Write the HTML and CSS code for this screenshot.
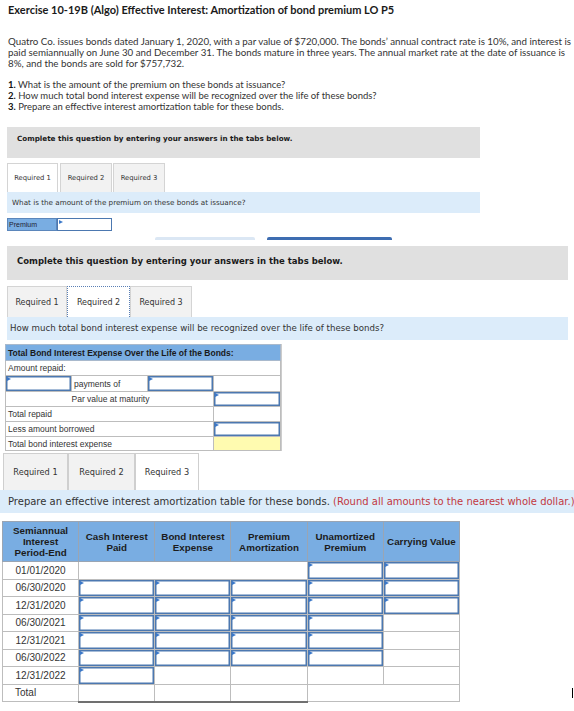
FILE: index.html
```html
<!DOCTYPE html>
<html>
<head>
<meta charset="utf-8">
<link rel="stylesheet" href="styles.css">
</head>
<body>
<div class="page">
  <h1 class="title">Exercise 10-19B (Algo) Effective Interest: Amortization of bond premium LO P5</h1>
  <p class="intro">Quatro Co. issues bonds dated January 1, 2020, with a par value of $720,000. The bonds’ annual contract rate is 10%, and interest is<br>paid semiannually on June 30 and December 31. The bonds mature in three years. The annual market rate at the date of issuance is<br>8%, and the bonds are sold for $757,732.</p>
  <ol class="reqs">
    <li><b>1.</b> What is the amount of the premium on these bonds at issuance?</li>
    <li><b>2.</b> How much total bond interest expense will be recognized over the life of these bonds?</li>
    <li><b>3.</b> Prepare an effective interest amortization table for these bonds.</li>
  </ol>

  <section class="s1">
    <div class="banner">Complete this question by entering your answers in the tabs below.</div>
    <div class="tabs">
      <div class="tab active">Required 1</div>
      <div class="tab">Required 2</div>
      <div class="tab">Required 3</div>
    </div>
    <div class="qbar">What is the amount of the premium on these bonds at issuance?</div>
    <div class="prem">
      <div class="prem-label">Premium</div>
      <div class="prem-input flag"></div>
    </div>
    <div class="btns">
      <div class="btn-light"></div>
      <div class="btn-dark"></div>
    </div>
  </section>

  <section class="s2">
    <div class="banner">Complete this question by entering your answers in the tabs below.</div>
    <div class="tabs">
      <div class="tab">Required 1</div>
      <div class="tab active focus">Required 2</div>
      <div class="tab">Required 3</div>
    </div>
    <div class="qbar">How much total bond interest expense will be recognized over the life of these bonds?</div>
    <table class="t2">
      <colgroup><col class="c1"><col class="c2"><col class="c3"><col class="c4"></colgroup>
      <tr class="hrow"><th colspan="4">Total Bond Interest Expense Over the Life of the Bonds:</th></tr>
      <tr class="r15"><td colspan="4">Amount repaid:</td></tr>
      <tr class="r16"><td class="in"></td><td>payments of</td><td class="in"></td><td></td></tr>
      <tr class="r15"><td colspan="3" class="center">Par value at maturity</td><td class="in"></td></tr>
      <tr class="r15"><td colspan="3">Total repaid</td><td></td></tr>
      <tr class="r15"><td colspan="3">Less amount borrowed</td><td class="in"></td></tr>
      <tr class="r14"><td colspan="3">Total bond interest expense</td><td class="yellow"></td></tr>
    </table>
  </section>

  <section class="s3">
    <div class="tabs">
      <div class="tab">Required 1</div>
      <div class="tab">Required 2</div>
      <div class="tab active">Required 3</div>
    </div>
    <div class="qbar">Prepare an effective interest amortization table for these bonds. <span class="red">(Round all amounts to the nearest whole dollar.)</span></div>
    <table class="t3">
      <tr class="hrow">
        <th class="first">Semiannual Interest Period-End</th>
        <th>Cash Interest Paid</th>
        <th>Bond Interest Expense</th>
        <th>Premium Amortization</th>
        <th>Unamortized Premium</th>
        <th>Carrying Value</th>
      </tr>
      <tr><td class="date">01/01/2020</td><td colspan="3" class="blank"></td><td class="in"></td><td class="in"></td></tr>
      <tr><td class="date">06/30/2020</td><td class="in"></td><td class="in"></td><td class="in"></td><td class="in"></td><td class="in"></td></tr>
      <tr><td class="date">12/31/2020</td><td class="in"></td><td class="in"></td><td class="in"></td><td class="in"></td><td class="in"></td></tr>
      <tr><td class="date">06/30/2021</td><td class="in"></td><td class="in"></td><td class="in"></td><td class="in"></td><td></td></tr>
      <tr><td class="date">12/31/2021</td><td class="in"></td><td class="in"></td><td class="in"></td><td class="in"></td><td></td></tr>
      <tr><td class="date">06/30/2022</td><td class="in"></td><td class="in"></td><td class="in"></td><td class="in"></td><td></td></tr>
      <tr><td class="date">12/31/2022</td><td class="in"></td><td></td><td></td><td></td><td></td></tr>
      <tr class="total"><td class="lbl">Total</td><td class="tot"></td><td class="tot"></td><td class="tot"></td><td colspan="2"></td></tr>
    </table>
    <span class="caret"></span>
  </section>
</div>
</body>
</html>
```

FILE: styles.css
```css
* { box-sizing: border-box; }
html, body { margin: 0; padding: 0; background: #fff; }
.page { width: 574px; height: 711px; overflow: hidden; position: relative; }

.title {
  margin: 3px 0 0 8px;
  font: bold 11px/14px "Lato", "Liberation Sans", sans-serif;
  color: #1a1a1a;
  white-space: nowrap;
}
.intro {
  margin: 19px 0 0 8px;
  font: 9.75px/11px "Lato", "Liberation Sans", sans-serif;
  color: #333;
  white-space: nowrap;
}
.reqs {
  list-style: none;
  margin: 10px 0 0 8px;
  padding: 0;
  font: 9.5px/11px "Lato", "Liberation Sans", sans-serif;
  color: #333;
}
.reqs b { color: #111; }

/* shared */
.banner {
  background: #e0e0e0;
  font-family: "DejaVu Sans", Verdana, sans-serif;
  font-weight: bold;
  color: #1a1a1a;
  white-space: nowrap;
}
.tabs { display: flex; }
.tab {
  display: flex;
  align-items: center;
  justify-content: center;
  background: #f2f2f2;
  border: 1px solid #d4d4d4;
  border-bottom: none;
  font-family: "DejaVu Sans", Verdana, sans-serif;
  color: #333;
  white-space: nowrap;
}
.tab.active { background: #fff; }
.qbar {
  background: #dcecfa;
  font-family: "DejaVu Sans", Verdana, sans-serif;
  color: #333;
  white-space: nowrap;
  overflow: hidden;
}
.red { color: #c2383f; }

.flag, .in { position: relative; }
.flag::before, .in::before {
  content: "";
  position: absolute;
  left: 1px;
  top: 1px;
  border-left: 4px solid #3b78c9;
  border-top: 2px solid transparent;
  border-bottom: 2px solid transparent;
}

/* section 1 */
.s1 { margin: 15px 0 0 7px; width: 473px; }
.s1 .banner { height: 31px; padding: 8px 0 0 10px; font-size: 7.2px; line-height: 8px; }
.s1 .tabs { margin-top: 5px; gap: 1px; }
.s1 .tab { height: 29px; width: 52px; font-size: 6.8px; }
.s1 .tab:first-child { width: 51px; margin-right: 1px; }
.s1 .qbar { height: 21px; line-height: 21px; padding-left: 5px; font-size: 7.2px; }
.prem { display: flex; margin-top: 5px; height: 13px; }
.prem-label {
  width: 50px;
  background: #79ade2;
  border: 1px solid #5b86bb;
  font: 7px/11px "Liberation Sans", Arial, sans-serif;
  color: #223;
  padding-left: 1px;
}
.prem-input { width: 55px; border: 1.5px solid #4c78b0; background: #fff; }
.btns { display: flex; margin-top: 6px; height: 3px; }
.btn-light { margin-left: 148px; width: 100px; background: #dbe7f4; border-radius: 2px 2px 0 0; }
.btn-dark { margin-left: 12px; width: 125px; background: #3e6db1; border-radius: 2px 2px 0 0; }

/* section 2 */
.s2 { margin: 6px 0 0 7px; width: 561px; }
.s2 .banner { height: 34px; padding: 10px 0 0 10px; font-size: 8.5px; line-height: 10px; }
.s2 .tabs { margin-top: 6px; }
.s2 .tab { height: 31px; font-size: 8px; }
.s2 .tab:nth-child(1) { width: 60px; }
.s2 .tab:nth-child(2) { width: 63px; }
.s2 .tab:nth-child(3) { width: 62px; }
.s2 .tab.focus { border: 1px dotted #5a7fb5; border-bottom: none; }
.s2 .qbar { height: 23px; line-height: 23px; padding-left: 3px; font-size: 8.65px; }

.t2 {
  margin: 4px 0 0 -2px;
  border-collapse: collapse;
  width: 275px;
  table-layout: fixed;
  font: 8.5px "Liberation Sans", Arial, sans-serif;
  color: #333;
  box-shadow: 1px 0 0 #ccc;
}
.t2 .c1 { width: 66px; }
.t2 .c2 { width: 76px; }
.t2 .c3 { width: 66px; }
.t2 .c4 { width: 67px; }
.t2 td, .t2 th { border: 1px solid #bdbdbd; padding: 0 0 0 2px; white-space: nowrap; }
.t2 th { background: #79ade2; text-align: left; font-weight: bold; color: #1a1a1a; border-color: #a9b9cc; }
.t2 .hrow { height: 16px; }
.t2 .r16 { height: 16px; }
.t2 .r15 { height: 15px; }
.t2 .r14 { height: 14px; }
.t2 .center { text-align: center; }
.t2 td.in { box-shadow: inset 0 0 0 1.5px #4c78b0; }
.t2 .yellow { background: #fffbb0; }

/* section 3 */
.s3 { margin-top: 2px; position: relative; }
.s3 .tabs { margin-left: 3px; }
.s3 .tab { height: 37px; font-size: 8.2px; border-color: #cfcfcf; }
.s3 .tab:nth-child(1) { width: 65px; }
.s3 .tab:nth-child(2) { width: 67px; }
.s3 .tab:nth-child(3) { width: 64px; }
.s3 .qbar { height: 23px; line-height: 23px; padding-left: 8px; font-size: 10px; }

.t3 {
  margin: 8px 0 0 2px;
  border-collapse: collapse;
  table-layout: fixed;
  width: 458px;
  font: 10px "Liberation Sans", Arial, sans-serif;
  color: #333;
}
.t3 th {
  height: 40px;
  background: #79ade2;
  border: 1px solid #9aa5b3;
  font-weight: bold;
  font-size: 9.8px;
  line-height: 11px;
  color: #1c1c1c;
  padding: 0 2px;
  text-align: center;
  width: 76px;
}
.t3 th.first { padding: 0 5px; }
.t3 td { height: 17.5px; border: 1px solid #bdbdbd; padding: 0; }
.t3 td.date { text-align: center; }
.t3 td.in { box-shadow: inset 0 0 0 1.5px #4c78b0; }
.t3 td.lbl { padding-left: 12px; }
.t3 td.tot { border-bottom: 2px solid #707070; }

.caret {
  position: absolute;
  right: 1px;
  bottom: 5px;
  width: 1px;
  height: 10px;
  background: #000;
}
```
